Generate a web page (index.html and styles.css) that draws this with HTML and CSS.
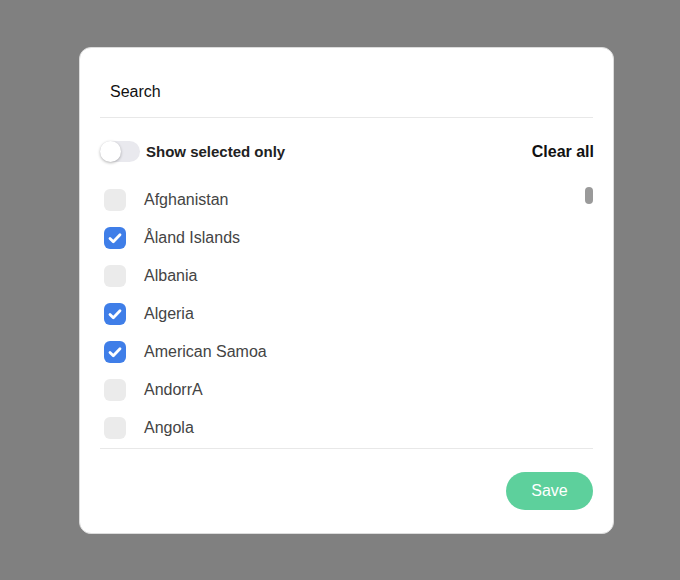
FILE: index.html
```html
<!DOCTYPE html>
<html>
<head>
<meta charset="utf-8">
<link rel="stylesheet" href="styles.css">
</head>
<body>
<div class="modal">
  <div class="search">Search</div>
  <div class="toolbar">
    <div class="toggle-wrap">
      <span class="toggle"><span class="knob"></span></span>
      <span class="toggle-label">Show selected only</span>
    </div>
    <span class="clear">Clear all</span>
  </div>
  <div class="list-wrap">
    <ul class="list">
      <li class="item"><span class="box"></span><span class="label">Afghanistan</span></li>
      <li class="item"><span class="box on"><svg viewBox="0 0 22 22" width="22" height="22"><path d="M6 11.5l3.3 3.3L16 7.8" fill="none" stroke="#fff" stroke-width="2.8" stroke-linecap="round" stroke-linejoin="round"/></svg></span><span class="label">Åland Islands</span></li>
      <li class="item"><span class="box"></span><span class="label">Albania</span></li>
      <li class="item"><span class="box on"><svg viewBox="0 0 22 22" width="22" height="22"><path d="M6 11.5l3.3 3.3L16 7.8" fill="none" stroke="#fff" stroke-width="2.8" stroke-linecap="round" stroke-linejoin="round"/></svg></span><span class="label">Algeria</span></li>
      <li class="item"><span class="box on"><svg viewBox="0 0 22 22" width="22" height="22"><path d="M6 11.5l3.3 3.3L16 7.8" fill="none" stroke="#fff" stroke-width="2.8" stroke-linecap="round" stroke-linejoin="round"/></svg></span><span class="label">American Samoa</span></li>
      <li class="item"><span class="box"></span><span class="label">AndorrA</span></li>
      <li class="item"><span class="box"></span><span class="label">Angola</span></li>
    </ul>
    <span class="thumb"></span>
  </div>
  <div class="footer">
    <button class="save">Save</button>
  </div>
</div>
</body>
</html>
```
FILE: styles.css
```css
html, body {
  margin: 0;
  height: 100%;
}
body {
  background: #808080;
  font-family: "Liberation Sans", Arial, sans-serif;
  display: flex;
  align-items: center;
  padding-left: 79px;
  box-sizing: border-box;
}
.modal {
  width: 535px;
  box-sizing: border-box;
  background: #fff;
  border: 1px solid #dcdcdc;
  border-radius: 12px;
  padding: 19px 20px 23px 20px;
}
.search {
  height: 50px;
  line-height: 50px;
  padding-left: 10px;
  font-size: 16px;
  color: #111;
  border-bottom: 1px solid #e8e8e8;
}
.toolbar {
  display: flex;
  align-items: center;
  justify-content: space-between;
  height: 22px;
  margin: 23px 0 18px 0;
}
.toggle-wrap {
  display: flex;
  align-items: center;
  gap: 6px;
}
.toggle {
  position: relative;
  width: 40px;
  height: 21px;
  border-radius: 11px;
  background: #e9e9ee;
}
.knob {
  position: absolute;
  left: 0;
  top: 0;
  width: 21px;
  height: 21px;
  border-radius: 50%;
  background: #fff;
  box-shadow: 0 1px 3px rgba(0,0,0,0.3);
}
.toggle-label {
  font-size: 15px;
  font-weight: bold;
  color: #222;
}
.clear {
  font-size: 16px;
  font-weight: bold;
  color: #111;
  margin-right: -1px;
}
.list-wrap {
  position: relative;
  height: 266px;
  margin-bottom: 1px;
  overflow: hidden;
}
.list {
  list-style: none;
  margin: 0;
  padding: 0;
}
.thumb {
  position: absolute;
  right: 0;
  top: 6px;
  width: 8px;
  height: 17px;
  border-radius: 4px;
  background: #9a9a9a;
}
.item {
  display: flex;
  align-items: center;
  height: 38px;
  padding-left: 4px;
}
.box {
  width: 22px;
  height: 22px;
  border-radius: 6px;
  background: #ebebeb;
  flex: none;
  display: flex;
}
.box.on {
  background: #3f7ee8;
}
.label {
  margin-left: 18px;
  font-size: 16px;
  color: #444;
}
.footer {
  border-top: 1px solid #e8e8e8;
  padding-top: 23px;
  display: flex;
  justify-content: flex-end;
}
.save {
  width: 87px;
  height: 38px;
  border: none;
  border-radius: 19px;
  background: #5dd09c;
  color: #fff;
  font-family: "Liberation Sans", Arial, sans-serif;
  font-size: 16px;
  padding: 0;
}
```
